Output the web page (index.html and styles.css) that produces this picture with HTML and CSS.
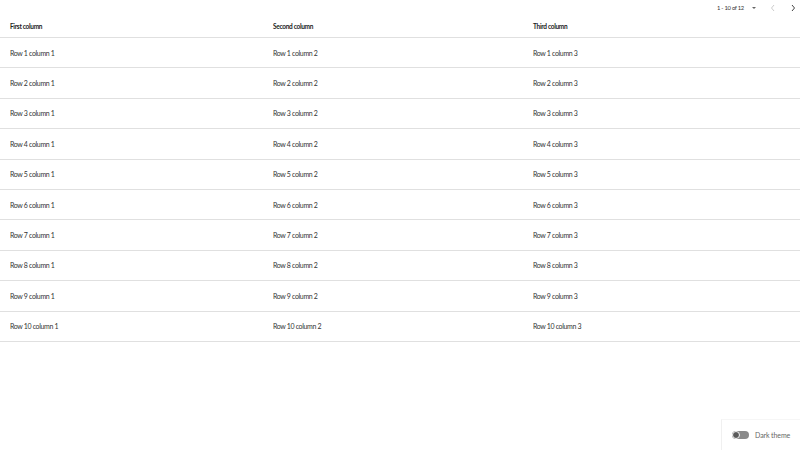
FILE: index.html
```html
<!DOCTYPE html>
<html>
<head>
<meta charset="utf-8">
<link rel="stylesheet" href="styles.css">
</head>
<body>
<div class="pager">
  <span class="range">1 - 10 of 12</span>
  <svg class="caret" width="6" height="4" viewBox="0 0 6 4"><path d="M1 1L3 3L5 1Z" fill="#666"/></svg>
  <svg class="chev prev" width="6" height="8" viewBox="0 0 6 8"><path d="M4 1L1.5 4L4 7" fill="none" stroke="#ccc" stroke-width="1"/></svg>
  <svg class="chev next" width="6" height="8" viewBox="0 0 6 8"><path d="M2 1L4.5 4L2 7" fill="none" stroke="#444" stroke-width="1"/></svg>
</div>
<table class="grid">
  <thead>
    <tr><th class="c1">First column</th><th class="c2">Second column</th><th class="c3">Third column</th></tr>
  </thead>
  <tbody>
    <tr><td>Row 1 column 1</td><td>Row 1 column 2</td><td>Row 1 column 3</td></tr>
    <tr><td>Row 2 column 1</td><td>Row 2 column 2</td><td>Row 2 column 3</td></tr>
    <tr><td>Row 3 column 1</td><td>Row 3 column 2</td><td>Row 3 column 3</td></tr>
    <tr><td>Row 4 column 1</td><td>Row 4 column 2</td><td>Row 4 column 3</td></tr>
    <tr><td>Row 5 column 1</td><td>Row 5 column 2</td><td>Row 5 column 3</td></tr>
    <tr><td>Row 6 column 1</td><td>Row 6 column 2</td><td>Row 6 column 3</td></tr>
    <tr><td>Row 7 column 1</td><td>Row 7 column 2</td><td>Row 7 column 3</td></tr>
    <tr><td>Row 8 column 1</td><td>Row 8 column 2</td><td>Row 8 column 3</td></tr>
    <tr><td>Row 9 column 1</td><td>Row 9 column 2</td><td>Row 9 column 3</td></tr>
    <tr><td>Row 10 column 1</td><td>Row 10 column 2</td><td>Row 10 column 3</td></tr>
  </tbody>
</table>
<div class="theme">
  <span class="toggle"><span class="knob"></span></span>
  <span class="theme-label">Dark theme</span>
</div>
</body>
</html>
```
FILE: styles.css
```css
html, body {
  margin: 0;
  padding: 0;
  background: #fff;
  font-family: Lato, "Open Sans", sans-serif;
  color: #222;
}
.pager {
  height: 15px;
  display: flex;
  justify-content: flex-end;
  align-items: center;
  font-size: 5.8px;
  letter-spacing: -0.25px;
  color: #333;
}
.range { margin-right: 7px; }
.caret { margin-right: 13px; }
.chev.prev { margin-right: 14px; }
.chev.next { margin-right: 4px; }
.grid {
  width: 100%;
  border-collapse: collapse;
  font-size: 7px;
  letter-spacing: -0.35px;
}
.grid th {
  text-align: left;
  font-weight: 700;
  font-size: 6.5px;
  letter-spacing: -0.3px;
  height: 22px;
  padding: 0 0 0 10px;
  border-bottom: 1px solid #e0e0e0;
  color: #222;
}
.grid .c1 { width: 253px; }
.grid .c2 { width: 250px; }
.grid td {
  height: 29.4px;
  padding: 0 0 0 10px;
  border-bottom: 1px solid #e0e0e0;
  color: #333;
}
.theme {
  position: fixed;
  right: 0;
  bottom: 0;
  width: 68px;
  height: 30px;
  padding-left: 10px;
  display: flex;
  align-items: center;
  gap: 6px;
  background: #fff;
  border-left: 1px solid #f0f0f0;
  border-top: 1px solid #f6f6f6;
  font-size: 7px;
  letter-spacing: -0.1px;
  color: #666;
}
.toggle {
  width: 17px;
  height: 8px;
  border-radius: 4px;
  background: #8a8a8a;
  position: relative;
  display: inline-block;
}
.knob {
  position: absolute;
  left: 0;
  top: 0;
  width: 6px;
  height: 6px;
  border-radius: 50%;
  background: #5a5a5a;
  border: 1px solid #f4f4f4;
}
```
